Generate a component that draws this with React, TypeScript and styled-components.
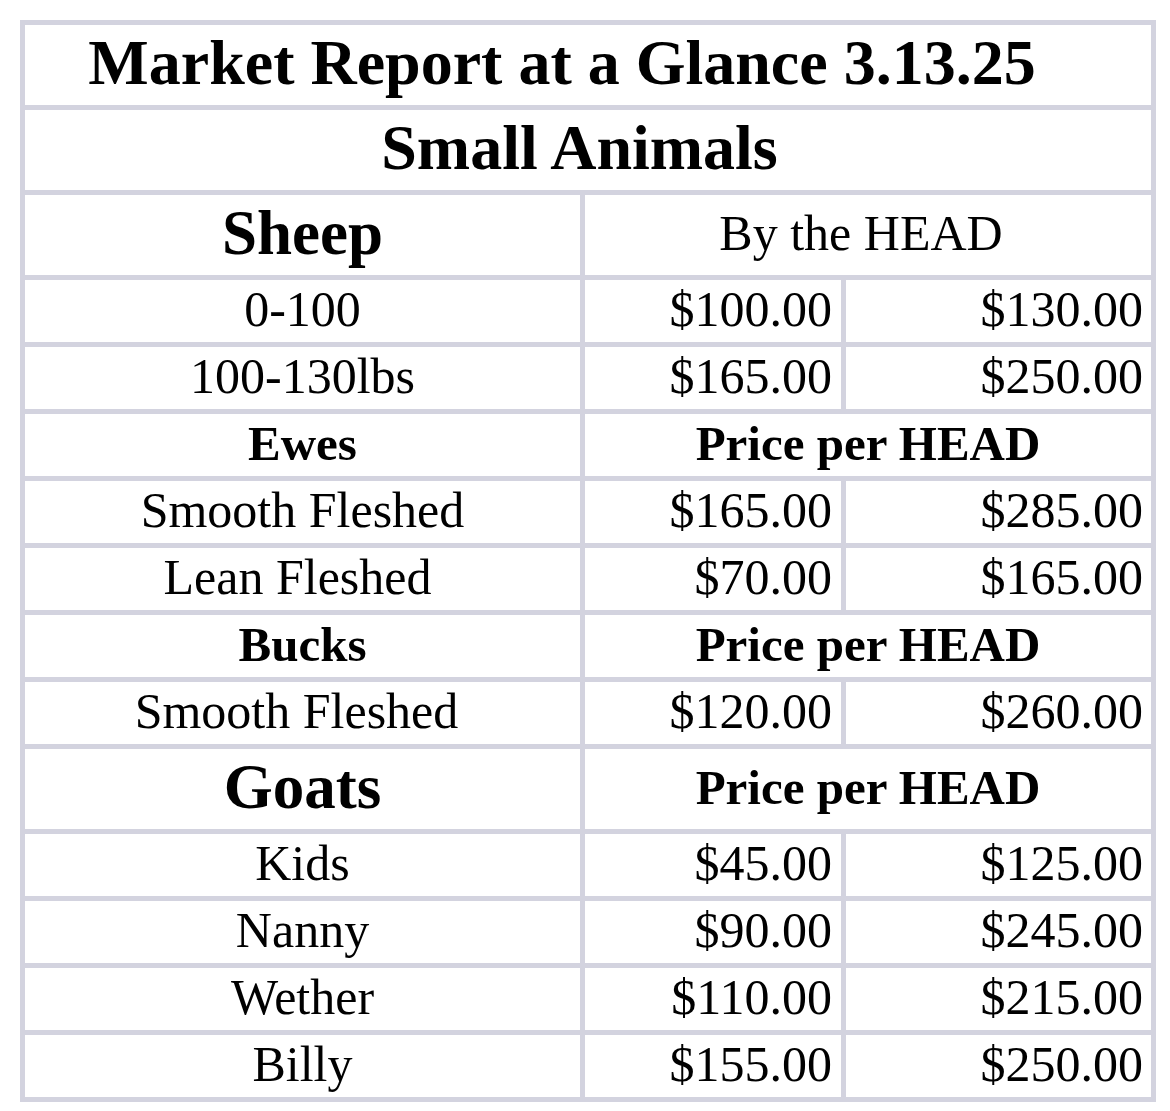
import React from 'react';
import styled, { createGlobalStyle } from 'styled-components';

const GlobalStyle = createGlobalStyle`
  html, body {
    margin: 0;
    padding: 0;
    background: #ffffff;
  }
`;

const Page = styled.div`
  padding: 20px 0 0 20px;
  font-family: 'Liberation Serif', 'Times New Roman', serif;
  color: #000;
`;

const Table = styled.div`
  display: grid;
  width: 1126px;
  grid-template-columns: 555px 256px 305px;
  grid-template-rows: 80px 80px 80px repeat(7, 62px) 80px repeat(4, 62px);
  gap: 5px;
  padding: 5px;
  background: #d3d3df;
`;

type Align = 'center' | 'right';

const Cell = styled.div<{
  $span?: number;
  $align?: Align;
  $bold?: boolean;
  $size?: number;
  $shift?: number;
}>`
  grid-column: span ${(p) => p.$span ?? 1};
  background: #ffffff;
  display: flex;
  align-items: center;
  justify-content: ${(p) => (p.$align === 'right' ? 'flex-end' : 'center')};
  padding: 0 0 4px 0;
  padding-right: ${(p) => (p.$shift ? `${p.$shift}px` : p.$align === 'right' ? '9px' : '0')};
  font-size: ${(p) => p.$size ?? 50}px;
  font-weight: ${(p) => (p.$bold ? 700 : 400)};
  line-height: 1;
  white-space: nowrap;
`;

type PriceRow = { label: string; low: string; high: string; nudge?: number };

const sheep: PriceRow[] = [
  { label: '0-100', low: '$100.00', high: '$130.00' },
  { label: '100-130lbs', low: '$165.00', high: '$250.00' },
];

const ewes: PriceRow[] = [
  { label: 'Smooth Fleshed', low: '$165.00', high: '$285.00' },
  { label: 'Lean Fleshed', low: '$70.00', high: '$165.00', nudge: 10 },
];

const bucks: PriceRow[] = [
  { label: 'Smooth Fleshed', low: '$120.00', high: '$260.00', nudge: 12 },
];

const goats: PriceRow[] = [
  { label: 'Kids', low: '$45.00', high: '$125.00' },
  { label: 'Nanny', low: '$90.00', high: '$245.00' },
  { label: 'Wether', low: '$110.00', high: '$215.00' },
  { label: 'Billy', low: '$155.00', high: '$250.00' },
];

const Rows = ({ rows }: { rows: PriceRow[] }) => (
  <>
    {rows.map((r) => (
      <React.Fragment key={r.label + r.low}>
        <Cell $shift={r.nudge}>{r.label}</Cell>
        <Cell $align="right">{r.low}</Cell>
        <Cell $align="right" $shift={8}>
          {r.high}
        </Cell>
      </React.Fragment>
    ))}
  </>
);

const App = () => (
  <Page>
    <GlobalStyle />
    <Table>
      <Cell $span={3} $bold $size={64} $shift={52}>
        Market Report at a Glance 3.13.25
      </Cell>
      <Cell $span={3} $bold $size={64} $shift={17}>
        Small Animals
      </Cell>

      <Cell $bold $size={63}>
        Sheep
      </Cell>
      <Cell $span={2} $shift={14}>
        By the HEAD
      </Cell>
      <Rows rows={sheep} />

      <Cell $bold $size={49}>
        Ewes
      </Cell>
      <Cell $span={2} $bold $size={49}>
        Price per HEAD
      </Cell>
      <Rows rows={ewes} />

      <Cell $bold $size={49}>
        Bucks
      </Cell>
      <Cell $span={2} $bold $size={49}>
        Price per HEAD
      </Cell>
      <Rows rows={bucks} />

      <Cell $bold $size={63}>
        Goats
      </Cell>
      <Cell $span={2} $bold $size={49}>
        Price per HEAD
      </Cell>
      <Rows rows={goats} />
    </Table>
  </Page>
);

export default App;
